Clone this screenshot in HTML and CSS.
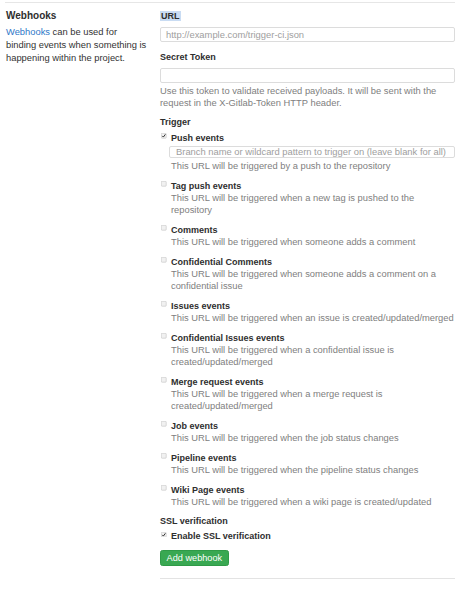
FILE: index.html
```html
<!DOCTYPE html>
<html lang="en">
<head>
<meta charset="utf-8">
<title>Webhooks</title>
<link rel="stylesheet" href="styles.css">
</head>
<body>
<div class="page">
  <div class="row">
    <div class="side">
      <h4 class="side-title">Webhooks</h4>
      <p class="side-text"><a class="link" href="#">Webhooks</a> can be used for binding events when something is happening within the project.</p>
    </div>
    <form class="main">
      <div class="group">
        <label class="label"><span class="hl">URL</span></label>
        <div class="input"><span class="ph">http://example.com/trigger-ci.json</span></div>
      </div>
      <div class="group group-help">
        <label class="label">Secret Token</label>
        <div class="input"></div>
        <p class="help help-block">Use this token to validate received payloads. It will be sent with the request in the X-Gitlab-Token HTTP header.</p>
      </div>
      <div class="group-tight">
        <label class="label">Trigger</label>
        <ul class="checks">
          <li class="check">
            <svg class="cb" viewBox="0 0 10 10"><rect x=".5" y=".5" width="9" height="9" rx="1.5" fill="#f1f1f1" stroke="#bdbdbd"/><path d="M2.3 5.2 L4.3 7.4 L8 2.4" fill="none" stroke="#333333" stroke-width="1.8"/></svg>
            <div class="check-body">
              <div class="check-title">Push events</div>
              <div class="input input-sm"><span class="ph">Branch name or wildcard pattern to trigger on (leave blank for all)</span></div>
              <p class="help">This URL will be triggered by a push to the repository</p>
            </div>
          </li>
          <li class="check">
            <svg class="cb" viewBox="0 0 10 10"><rect x=".5" y=".5" width="9" height="9" rx="1.5" fill="#f1f1f1" stroke="#bdbdbd"/></svg>
            <div class="check-body">
              <div class="check-title">Tag push events</div>
              <p class="help">This URL will be triggered when a new tag is pushed to the repository</p>
            </div>
          </li>
          <li class="check">
            <svg class="cb" viewBox="0 0 10 10"><rect x=".5" y=".5" width="9" height="9" rx="1.5" fill="#f1f1f1" stroke="#bdbdbd"/></svg>
            <div class="check-body">
              <div class="check-title">Comments</div>
              <p class="help">This URL will be triggered when someone adds a comment</p>
            </div>
          </li>
          <li class="check">
            <svg class="cb" viewBox="0 0 10 10"><rect x=".5" y=".5" width="9" height="9" rx="1.5" fill="#f1f1f1" stroke="#bdbdbd"/></svg>
            <div class="check-body">
              <div class="check-title">Confidential Comments</div>
              <p class="help">This URL will be triggered when someone adds a comment on a confidential issue</p>
            </div>
          </li>
          <li class="check">
            <svg class="cb" viewBox="0 0 10 10"><rect x=".5" y=".5" width="9" height="9" rx="1.5" fill="#f1f1f1" stroke="#bdbdbd"/></svg>
            <div class="check-body">
              <div class="check-title">Issues events</div>
              <p class="help">This URL will be triggered when an issue is created/updated/merged</p>
            </div>
          </li>
          <li class="check">
            <svg class="cb" viewBox="0 0 10 10"><rect x=".5" y=".5" width="9" height="9" rx="1.5" fill="#f1f1f1" stroke="#bdbdbd"/></svg>
            <div class="check-body">
              <div class="check-title">Confidential Issues events</div>
              <p class="help">This URL will be triggered when a confidential issue is created/updated/merged</p>
            </div>
          </li>
          <li class="check">
            <svg class="cb" viewBox="0 0 10 10"><rect x=".5" y=".5" width="9" height="9" rx="1.5" fill="#f1f1f1" stroke="#bdbdbd"/></svg>
            <div class="check-body">
              <div class="check-title">Merge request events</div>
              <p class="help">This URL will be triggered when a merge request is created/updated/merged</p>
            </div>
          </li>
          <li class="check">
            <svg class="cb" viewBox="0 0 10 10"><rect x=".5" y=".5" width="9" height="9" rx="1.5" fill="#f1f1f1" stroke="#bdbdbd"/></svg>
            <div class="check-body">
              <div class="check-title">Job events</div>
              <p class="help">This URL will be triggered when the job status changes</p>
            </div>
          </li>
          <li class="check">
            <svg class="cb" viewBox="0 0 10 10"><rect x=".5" y=".5" width="9" height="9" rx="1.5" fill="#f1f1f1" stroke="#bdbdbd"/></svg>
            <div class="check-body">
              <div class="check-title">Pipeline events</div>
              <p class="help">This URL will be triggered when the pipeline status changes</p>
            </div>
          </li>
          <li class="check">
            <svg class="cb" viewBox="0 0 10 10"><rect x=".5" y=".5" width="9" height="9" rx="1.5" fill="#f1f1f1" stroke="#bdbdbd"/></svg>
            <div class="check-body">
              <div class="check-title">Wiki Page events</div>
              <p class="help">This URL will be triggered when a wiki page is created/updated</p>
            </div>
          </li>
        </ul>
      </div>
      <div class="group-tight">
        <label class="label">SSL verification</label>
        <ul class="checks">
          <li class="check">
            <svg class="cb" viewBox="0 0 10 10"><rect x=".5" y=".5" width="9" height="9" rx="1.5" fill="#f1f1f1" stroke="#bdbdbd"/><path d="M2.3 5.2 L4.3 7.4 L8 2.4" fill="none" stroke="#333333" stroke-width="1.8"/></svg>
            <div class="check-body">
              <div class="check-title">Enable SSL verification</div>
            </div>
          </li>
        </ul>
      </div>
      <div class="actions">
        <button class="btn" type="button">Add webhook</button>
      </div>
      <div class="divider"></div>
    </form>
  </div>
</div>
</body>
</html>
```

FILE: styles.css
```css
* { box-sizing: border-box; }

body {
  margin: 0;
  background: #ffffff;
  font-family: "Liberation Sans", Arial, sans-serif;
  color: #2e2e2e;
  font-size: 9.35px;
}

.page {
  width: 450px;
  margin-left: 5px;
  padding-top: 2px;
}

.row {
  display: flex;
  border-top: 1px solid #e6e6e6;
  padding-top: 7px;
}

.side {
  width: 155px;
  flex: none;
  padding-left: 1px;
  padding-right: 12px;
}

.side-title {
  margin: 0;
  font-size: 10px;
  line-height: 12px;
  font-weight: 700;
  color: #2e2e2e;
}

.side-text {
  margin: 3.5px 0 0;
  font-size: 9.35px;
  line-height: 13px;
  color: #333333;
}

.link {
  color: #2f78c8;
  text-decoration: none;
}

.main {
  flex: 1;
  margin: 0;
}

.group {
  margin-bottom: 8.5px;
}

.group-help {
  margin-bottom: 0;
}

.group-tight {
  margin-top: 7px;
}

.label {
  display: block;
  font-size: 9px;
  line-height: 13px;
  font-weight: 700;
  color: #2e2e2e;
  margin-bottom: 4px;
}

.hl {
  background: #c9dcf3;
  padding: 0 1px;
}

.input {
  height: 15px;
  border: 1px solid #dcdcdc;
  border-radius: 2px;
  background: #ffffff;
  padding: 0 5px;
  display: flex;
  align-items: center;
}

.input-sm {
  height: 12px;
  margin: 1.7px 0 0 -2px;
  padding: 0 6px;
}

.ph {
  font-size: 9.4px;
  color: #9e9e9e;
  white-space: nowrap;
}

.help {
  margin: 0;
  font-size: 9.35px;
  line-height: 12px;
  color: #808080;
}

.help-block {
  margin-top: 2.5px;
}

.input-sm + .help {
  margin-top: 2px;
}

.checks {
  list-style: none;
  margin: -1.2px 0 0;
  padding: 0;
}

.check {
  display: grid;
  grid-template-columns: 11px 1fr;
  margin-bottom: 8px;
}

.check:last-child {
  margin-bottom: 0;
}

.cb {
  width: 5.5px;
  height: 5.5px;
  margin: 1.5px 0 0 1px;
  display: block;
}

.check-title {
  font-size: 9px;
  line-height: 12px;
  font-weight: 700;
  color: #2e2e2e;
}

.actions {
  margin-top: 7.3px;
}

.btn {
  display: inline-flex;
  align-items: center;
  height: 16px;
  padding: 0 5.5px;
  border: 1px solid #2f9a47;
  border-radius: 2.5px;
  background: #39a852;
  color: #ffffff;
  font-family: "Liberation Sans", Arial, sans-serif;
  font-size: 9.2px;
  line-height: 14px;
}

.divider {
  margin-top: 12px;
  border-top: 1px solid #e3e3e3;
}
```
